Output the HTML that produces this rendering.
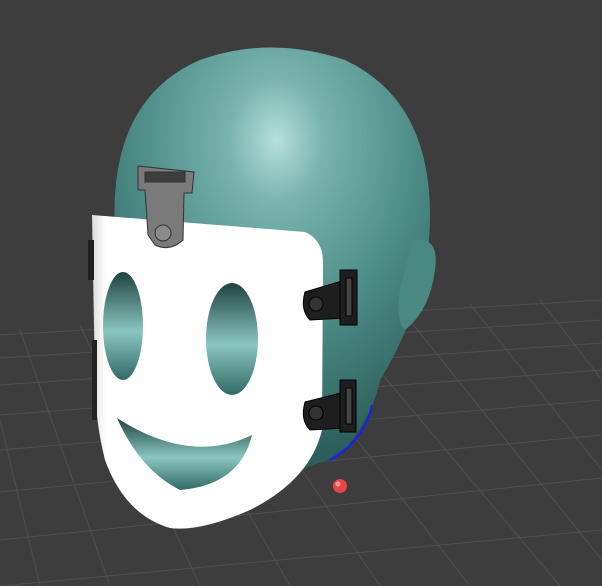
<!DOCTYPE html>
<html><head><style>html,body{margin:0;padding:0;background:#3d3d3d;}svg{display:block}</style></head>
<body>
<svg width="602" height="586" viewBox="0 0 602 586" xmlns="http://www.w3.org/2000/svg">
<defs>
<radialGradient id="hg" cx="0.52" cy="0.22" r="0.75">
<stop offset="0" stop-color="#b5e0dc"/>
<stop offset="0.2" stop-color="#78b3ad"/>
<stop offset="0.6" stop-color="#4b8a85"/>
<stop offset="1" stop-color="#2c5f5b"/>
</radialGradient>
<linearGradient id="eye" x1="0" y1="0" x2="0" y2="1">
<stop offset="0" stop-color="#1f4341"/><stop offset="0.55" stop-color="#8ac6c0"/><stop offset="1" stop-color="#326a66"/>
</linearGradient>
<linearGradient id="mg" x1="0" y1="0" x2="1" y2="0">
<stop offset="0" stop-color="#dcdcdc"/><stop offset="0.06" stop-color="#ffffff"/>
</linearGradient>
</defs>
<rect width="602" height="586" fill="#3d3d3d"/>
<g stroke="#4f4f4f" stroke-width="1" fill="none">
<path d="M0,335 L602,300 M0,358 L602,320 M0,385 L602,343 M0,415 L602,370 M0,450 L602,400 M0,492 L602,435 M0,540 L602,478 M0,586 L602,530"/>
<path d="M0,420 L40,586 M20,330 L110,586 M80,325 L200,586 M140,322 L290,586 M200,318 L380,586 M260,315 L470,586 M330,312 L560,586 M400,308 L602,560 M470,304 L602,470 M540,300 L602,380"/>
</g>
<path d="M115,230 Q108,100 200,60 Q270,35 345,60 Q430,100 430,215 Q430,255 420,290 Q405,340 380,380 Q372,420 340,455 L300,470 L110,470 Z" fill="url(#hg)"/>
<path d="M412,240 Q440,235 435,270 Q430,310 405,330 Q395,320 400,290 Z" fill="#4a8882"/>
<path d="M330,460 Q365,440 372,405" stroke="#1020ff" stroke-width="2" fill="none"/>
<path d="M92,215 L305,232 Q323,240 323,262 L322,430 Q310,480 250,510 Q200,532 170,528 Q125,515 105,460 Q95,420 95,380 Z" fill="url(#mg)"/>
<ellipse cx="123" cy="326" rx="20" ry="54" fill="url(#eye)"/>
<ellipse cx="232" cy="339" rx="26" ry="56" fill="url(#eye)"/>
<path d="M117,418 Q190,465 252,435 Q240,485 180,490 Q140,470 117,418 Z" fill="url(#eye)"/>
<g fill="#7a7a7a" stroke="#333" stroke-width="1">
<path d="M138,166 L194,172 L192,193 L184,193 L183,240 Q170,252 155,245 L148,235 L145,190 L138,190 Z"/>
<rect x="145" y="172" width="40" height="10" fill="#3d3d3d" stroke="#333"/>
<circle cx="163" cy="233" r="8" fill="#8a8a8a"/>
</g>
<g fill="#1e1e1e" stroke="#000">
<path d="M305,292 L345,280 L345,318 L310,320 Q300,310 305,292 Z"/>
<rect x="340" y="270" width="17" height="55"/>
<rect x="346" y="278" width="6" height="38" fill="#444"/>
<circle cx="316" cy="304" r="7" fill="#333"/>
<path d="M305,402 L345,392 L345,428 L310,430 Q300,420 305,402 Z"/>
<rect x="340" y="380" width="16" height="52"/>
<rect x="346" y="388" width="6" height="36" fill="#444"/>
<circle cx="316" cy="413" r="7" fill="#333"/>
</g>
<rect x="88" y="240" width="6" height="40" fill="#222"/>
<rect x="92" y="340" width="5" height="80" fill="#222"/>
<circle cx="340" cy="486" r="7" fill="#e84545"/>
<circle cx="338" cy="484" r="2.5" fill="#ff9a9a"/>
</svg>
</body></html>
